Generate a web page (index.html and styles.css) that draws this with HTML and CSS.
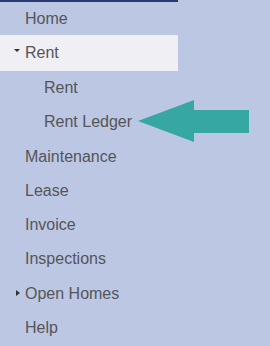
FILE: index.html
```html
<!DOCTYPE html>
<html>
<head>
<meta charset="utf-8">
<link rel="stylesheet" href="styles.css">
</head>
<body>
<nav class="sidenav">
  <div class="item item-first">Home</div>
  <div class="item item-open"><span class="caret caret-down"></span>Rent</div>
  <div class="item sub">Rent</div>
  <div class="item sub">Rent Ledger</div>
  <div class="item">Maintenance</div>
  <div class="item">Lease</div>
  <div class="item">Invoice</div>
  <div class="item">Inspections</div>
  <div class="item"><span class="caret caret-right"></span>Open Homes</div>
  <div class="item">Help</div>
</nav>
<svg class="pointer" width="270" height="346" viewBox="0 0 270 346">
  <polygon points="138,121 194,100 194,110 249,110 249,133 194,133 194,142" fill="#37a7a4"/>
</svg>
</body>
</html>
```
FILE: styles.css
```css
html, body {
  margin: 0;
  padding: 0;
}
body {
  background: #bcc7e3;
  width: 270px;
  height: 346px;
  overflow: hidden;
  position: relative;
  font-family: "Liberation Sans", Arial, sans-serif;
  font-size: 16px;
  color: #555559;
}
.sidenav {
  width: 178px;
  border-top: 2px solid #283a70;
  display: flex;
  flex-direction: column;
}
.item {
  position: relative;
  height: 34.25px;
  line-height: 34.25px;
  padding-left: 25px;
  white-space: nowrap;
}
.item-first {
  height: 33px;
  line-height: 33px;
}
.item-open {
  height: 36px;
  line-height: 36px;
  background: #efeff4;
}
.sub {
  padding-left: 44px;
}
.caret {
  position: absolute;
  width: 0;
  height: 0;
}
.caret-down {
  left: 13.5px;
  top: 49px;
  top: 14px;
  border-left: 3.5px solid transparent;
  border-right: 3.5px solid transparent;
  border-top: 3.5px solid #333;
}
.caret-right {
  left: 16px;
  top: 13.5px;
  border-top: 3.5px solid transparent;
  border-bottom: 3.5px solid transparent;
  border-left: 4px solid #333;
}
.pointer {
  position: absolute;
  left: 0;
  top: 0;
}
```
